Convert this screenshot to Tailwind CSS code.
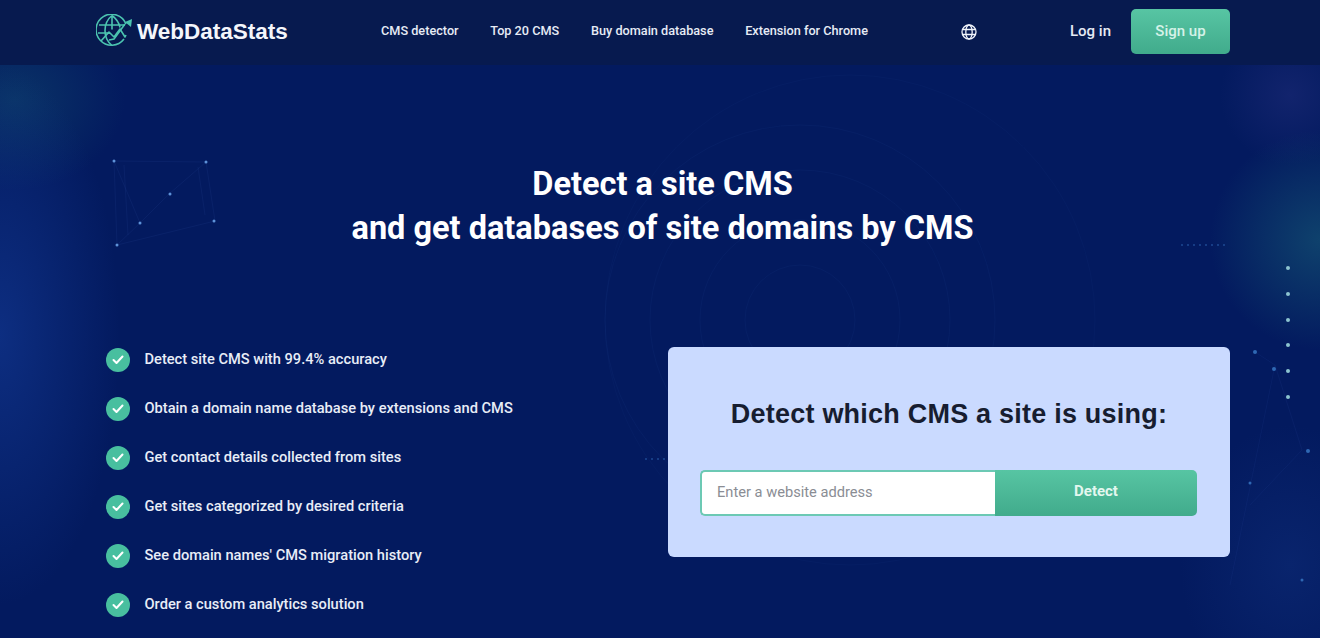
<!DOCTYPE html>
<html lang="en">
  <head>
    <meta charset="UTF-8" />
    <title>WebDataStats</title>
    <script src="https://cdn.jsdelivr.net/npm/@tailwindcss/browser@4"></script>
  </head>
  <body class="w-[1320px] h-[638px] overflow-hidden bg-[#031a5f] font-['Roboto',sans-serif] text-white">
    <!-- Header -->
    <header class="relative z-10 h-[65px] bg-[#071a4f] flex items-center pl-[96px] pr-[90px]">
      <a class="flex items-center w-[285px] shrink-0">
        <svg class="w-[37px] h-[34px] mb-[3px]" viewBox="0 0 37 34" fill="none" stroke="#4cc4b0" stroke-width="1.6">
          <path d="M28 25a15.500 15.500 0 1 1 2-15" />
          <path d="M3 11h26M2 19h11M16 1.500c-5 4-7 9-7 15s2 11 7 15M16 1.500c4 3 7 7 8 12M16 1.500v14" />
          <path d="M5 27l8-9 5 5 6-8 5 8 1-2" stroke-linejoin="round" />
          <path d="M13 26l5-1 11-15" />
          <path d="M29 8l7-3-1 8z" fill="#4cc4b0" stroke="none" />
        </svg>
        <span class="ml-[4px] font-['Liberation_Sans',sans-serif] font-bold text-[22.500px] leading-none text-[#f4f6fb]">WebDataStats</span>
      </a>
      <nav class="flex items-center gap-[31.700px] text-[12.700px] font-medium text-[#e6ebf5] mb-[3px]">
        <a>CMS detector</a>
        <a>Top 20 CMS</a>
        <a>Buy domain database</a>
        <a>Extension for Chrome</a>
      </nav>
      <svg class="w-[16px] h-[16px] ml-[93px] mb-[2px]" viewBox="0 0 16 16" fill="none" stroke="#f0f3fa" stroke-width="1.300">
        <circle cx="8" cy="8" r="7" />
        <ellipse cx="8" cy="8" rx="3.200" ry="7" />
        <path d="M1.500 5.500h13M1.500 10.500h13" />
      </svg>
      <a class="ml-auto text-[15px] font-medium text-[#e6ebf5] mb-[3px]">Log in</a>
      <a class="ml-[20px] w-[99px] h-[45px] mb-[3px] rounded-[5px] bg-gradient-to-b from-[#57c5a3] to-[#41ab8c] flex items-center justify-center text-[15px] font-medium text-[#d5f2e8]">Sign up</a>
    </header>

    <main class="relative h-[573px] overflow-hidden">
      <!-- Background glows and network decoration -->
      <div class="absolute inset-0 bg-[radial-gradient(circle_at_1320px_175px,rgba(24,98,120,0.55),transparent_110px),radial-gradient(circle_at_1290px_30px,rgba(40,50,130,0.4),transparent_70px),radial-gradient(ellipse_120px_270px_at_0px_270px,rgba(25,70,170,0.45),transparent),radial-gradient(ellipse_110px_90px_at_15px_35px,rgba(20,90,115,0.4),transparent),radial-gradient(ellipse_110px_140px_at_1290px_500px,rgba(20,55,135,0.35),transparent)]"></div>
      <svg class="absolute inset-0 w-[1320px] h-[573px]" viewBox="0 0 1320 573" fill="none">
        <g stroke="#2a4a9c" stroke-width="1">
          <path stroke-opacity="0.16" d="M114 96L206 97L215 156L117 180Z" />
          <path stroke-opacity="0.16" d="M114 96L140 158L169 129L206 97M140 158L117 180M124 100L128 170M198 102L205 150" />
          <circle cx="800" cy="255" r="55" stroke-opacity="0.1" />
          <circle cx="800" cy="255" r="100" stroke-opacity="0.1" />
          <circle cx="800" cy="255" r="150" stroke-opacity="0.1" />
          <circle cx="800" cy="255" r="195" stroke-opacity="0.1" />
          <circle cx="850" cy="255" r="245" stroke-opacity="0.08" />
          <path stroke-opacity="0.14" d="M1255 287L1275 300L1302 385L1250 440M1275 300L1230 520" />
        </g>
        <g fill="#5d92d8">
          <circle cx="114" cy="96" r="1.500" />
          <circle cx="206" cy="97" r="1.500" />
          <circle cx="170" cy="129" r="1.500" />
          <circle cx="140" cy="158" r="1.500" />
          <circle cx="214" cy="156" r="1.500" />
          <circle cx="117" cy="180" r="1.500" />
        </g>
        <g fill="#8dc4d0">
          <circle cx="1288" cy="203" r="2" />
          <circle cx="1288" cy="229" r="2" />
          <circle cx="1288" cy="255" r="2" />
          <circle cx="1288" cy="280" r="2" />
          <circle cx="1288" cy="306" r="2" />
          <circle cx="1288" cy="332" r="2" />
        </g>
        <g fill="#2f68b4">
          <circle cx="1255" cy="287" r="2" />
          <circle cx="1274" cy="304" r="2" />
          <circle cx="1308" cy="386" r="2" />
          <circle cx="1250" cy="418" r="1.500" />
          <circle cx="1302" cy="515" r="1.500" />
        </g>
        <g fill="#2f68b4" fill-opacity="0.6">
          <circle cx="1182" cy="180" r="1" />
          <circle cx="1188" cy="180" r="1" />
          <circle cx="1194" cy="180" r="1" />
          <circle cx="1200" cy="180" r="1" />
          <circle cx="1206" cy="180" r="1" />
          <circle cx="1212" cy="180" r="1" />
          <circle cx="1218" cy="180" r="1" />
          <circle cx="1224" cy="180" r="1" />
          <circle cx="646" cy="394" r="1" />
          <circle cx="652" cy="394" r="1" />
          <circle cx="658" cy="394" r="1" />
          <circle cx="664" cy="394" r="1" />
        </g>
      </svg>

      <div class="relative pt-[97px]">
        <h1 class="text-center text-[32.500px] leading-[44px] font-bold ml-[5px]">
          Detect a site CMS<br />and get databases of site domains by CMS
        </h1>

        <div class="flex justify-between mt-[97px] pl-[106px] pr-[90px]">
          <!-- Features -->
          <ul class="flex flex-col gap-[25px] pt-[1px] text-[14.650px] leading-[20px] font-medium text-[#e8edf7]">
            <li class="flex items-center gap-[14.500px] h-[24px]">
              <span class="w-[24px] h-[24px] rounded-full bg-[#48bf9f] flex items-center justify-center"><svg class="w-[12px] h-[10px]" viewBox="0 0 12 10" fill="none" stroke="#fff" stroke-width="2" stroke-linecap="round" stroke-linejoin="round"><path d="M1.500 5l3 3 6-6.500" /></svg></span>
              <span class="mb-[3px]">Detect site CMS with 99.4% accuracy</span>
            </li>
            <li class="flex items-center gap-[14.500px] h-[24px]">
              <span class="w-[24px] h-[24px] rounded-full bg-[#48bf9f] flex items-center justify-center"><svg class="w-[12px] h-[10px]" viewBox="0 0 12 10" fill="none" stroke="#fff" stroke-width="2" stroke-linecap="round" stroke-linejoin="round"><path d="M1.500 5l3 3 6-6.500" /></svg></span>
              <span class="mb-[3px]">Obtain a domain name database by extensions and CMS</span>
            </li>
            <li class="flex items-center gap-[14.500px] h-[24px]">
              <span class="w-[24px] h-[24px] rounded-full bg-[#48bf9f] flex items-center justify-center"><svg class="w-[12px] h-[10px]" viewBox="0 0 12 10" fill="none" stroke="#fff" stroke-width="2" stroke-linecap="round" stroke-linejoin="round"><path d="M1.500 5l3 3 6-6.500" /></svg></span>
              <span class="mb-[3px]">Get contact details collected from sites</span>
            </li>
            <li class="flex items-center gap-[14.500px] h-[24px]">
              <span class="w-[24px] h-[24px] rounded-full bg-[#48bf9f] flex items-center justify-center"><svg class="w-[12px] h-[10px]" viewBox="0 0 12 10" fill="none" stroke="#fff" stroke-width="2" stroke-linecap="round" stroke-linejoin="round"><path d="M1.500 5l3 3 6-6.500" /></svg></span>
              <span class="mb-[3px]">Get sites categorized by desired criteria</span>
            </li>
            <li class="flex items-center gap-[14.500px] h-[24px]">
              <span class="w-[24px] h-[24px] rounded-full bg-[#48bf9f] flex items-center justify-center"><svg class="w-[12px] h-[10px]" viewBox="0 0 12 10" fill="none" stroke="#fff" stroke-width="2" stroke-linecap="round" stroke-linejoin="round"><path d="M1.500 5l3 3 6-6.500" /></svg></span>
              <span class="mb-[3px]">See domain names' CMS migration history</span>
            </li>
            <li class="flex items-center gap-[14.500px] h-[24px]">
              <span class="w-[24px] h-[24px] rounded-full bg-[#48bf9f] flex items-center justify-center"><svg class="w-[12px] h-[10px]" viewBox="0 0 12 10" fill="none" stroke="#fff" stroke-width="2" stroke-linecap="round" stroke-linejoin="round"><path d="M1.500 5l3 3 6-6.500" /></svg></span>
              <span class="mb-[3px]">Order a custom analytics solution</span>
            </li>
          </ul>

          <!-- Detect form -->
          <div class="w-[562px] h-[210px] rounded-[6px] bg-[#cadaff] px-[32px] pt-[50px]">
            <h2 class="text-center font-['Liberation_Sans',sans-serif] font-bold text-[27px] leading-[34px] tracking-[0.22px] text-[#171d30]">Detect which CMS a site is using:</h2>
            <form class="flex mt-[39px] h-[46px]">
              <div class="w-[295px] bg-white border-2 border-r-0 border-[#6cc9b4] rounded-l-[5px] flex items-center pl-[15px] text-[14.650px] text-[#8a8d94]">Enter a website address</div>
              <button type="button" class="w-[202px] rounded-r-[5px] bg-gradient-to-b from-[#57c5a3] to-[#41ab8c] text-[15px] font-bold text-[#e3f7ef] pb-[3px]">Detect</button>
            </form>
          </div>
        </div>
      </div>
    </main>
  </body>
</html>
